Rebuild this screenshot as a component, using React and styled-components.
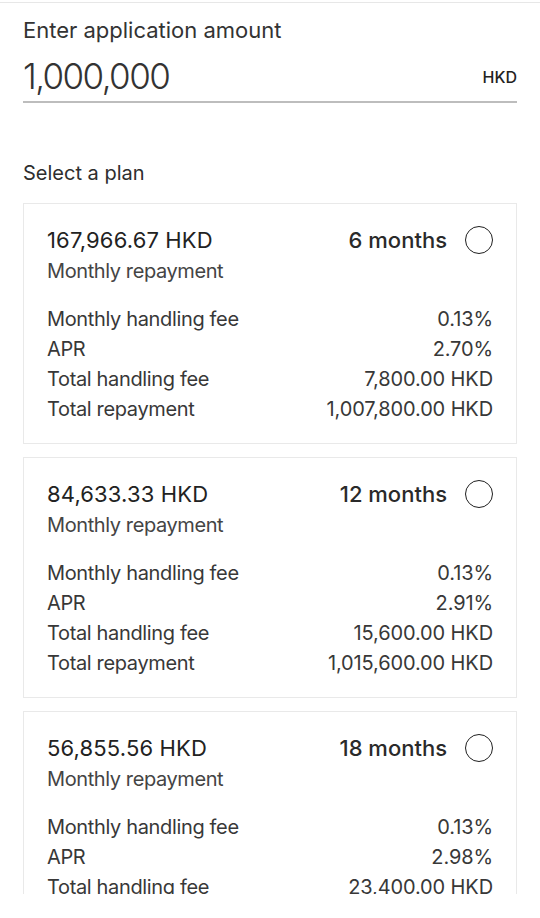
import React from "react";
import styled, { createGlobalStyle } from "styled-components";

const GlobalStyle = createGlobalStyle`
  html, body {
    margin: 0;
    padding: 0;
    background: #ffffff;
  }
  body {
    font-family: Inter, "Noto Sans", "Liberation Sans", sans-serif;
    color: #2b2b2b;
    -webkit-font-smoothing: antialiased;
  }
`;

const plans = [
  {
    amount: "167,966.67 HKD",
    months: "6 months",
    fee: "0.13%",
    apr: "2.70%",
    totalFee: "7,800.00 HKD",
    total: "1,007,800.00 HKD",
  },
  {
    amount: "84,633.33 HKD",
    months: "12 months",
    fee: "0.13%",
    apr: "2.91%",
    totalFee: "15,600.00 HKD",
    total: "1,015,600.00 HKD",
  },
  {
    amount: "56,855.56 HKD",
    months: "18 months",
    fee: "0.13%",
    apr: "2.98%",
    totalFee: "23,400.00 HKD",
    total: "1,023,400.00 HKD",
  },
];

const Page = styled.div`
  height: 918px;
  display: flex;
  flex-direction: column;
  overflow: hidden;
`;

const TopRule = styled.div`
  margin-top: 2px;
  border-top: 1px solid #e7e7e7;
`;

/* visible list area ends at y=894, rest of the window stays white */
const Scroller = styled.div`
  box-sizing: border-box;
  height: 891px;
  overflow: hidden;
  padding: 14px 23px 0 23px;
`;

const FieldLabel = styled.div`
  font-size: 22px;
  line-height: 26px;
  color: #333333;
`;

const AmountField = styled.div`
  margin-top: 11px;
  display: flex;
  align-items: center;
  justify-content: space-between;
  padding-bottom: 3px;
  border-bottom: 2px solid #bdbdbd;
`;

const AmountValue = styled.div`
  font-size: 35px;
  line-height: 44px;
  font-weight: 300;
  letter-spacing: -1.6px;
  color: #333333;
`;

const Currency = styled.div`
  font-size: 16px;
  font-weight: 500;
  color: #222222;
  margin-top: 1px;
`;

const SectionTitle = styled.div`
  margin-top: 58px;
  font-size: 20px;
  line-height: 24px;
  color: #2e2e2e;
`;

const PlanList = styled.div`
  margin-top: 18px;
  display: flex;
  flex-direction: column;
  gap: 13px;
`;

const PlanCard = styled.div`
  border: 1px solid #e9e9e9;
  padding: 22px 23px 19px 23px;
`;

const PlanHeader = styled.div`
  display: flex;
  justify-content: space-between;
  align-items: flex-start;
`;

const Monthly = styled.div`
  font-size: 22px;
  line-height: 28px;
  color: #222222;
  letter-spacing: 0.15px;
`;

const Caption = styled.div`
  margin-top: 3px;
  font-size: 20px;
  line-height: 28px;
  letter-spacing: -0.4px;
  color: #444444;
`;

const Term = styled.label`
  display: flex;
  align-items: center;
  gap: 18px;
  font-size: 22px;
  line-height: 28px;
  font-weight: 500;
  color: #2a2a2a;
`;

const Radio = styled.span`
  width: 28px;
  height: 28px;
  box-sizing: border-box;
  border-radius: 50%;
  border: 1.5px solid #1f1f1f;
  background: #fff;
`;

const Details = styled.div`
  margin-top: 19px;
`;

const DetailRow = styled.div`
  display: flex;
  justify-content: space-between;
  font-size: 20px;
  line-height: 30px;
  color: #383838;
`;

const DetailLabel = styled.span`
  letter-spacing: -0.35px;
`;

const DetailValue = styled.span`
  letter-spacing: -0.12px;
`;

const Plan = ({ plan }) => (
  <PlanCard>
    <PlanHeader>
      <div>
        <Monthly>{plan.amount}</Monthly>
        <Caption>Monthly repayment</Caption>
      </div>
      <Term>
        {plan.months}
        <Radio />
      </Term>
    </PlanHeader>
    <Details>
      <DetailRow>
        <DetailLabel>Monthly handling fee</DetailLabel>
        <DetailValue>{plan.fee}</DetailValue>
      </DetailRow>
      <DetailRow>
        <DetailLabel>APR</DetailLabel>
        <DetailValue>{plan.apr}</DetailValue>
      </DetailRow>
      <DetailRow>
        <DetailLabel>Total handling fee</DetailLabel>
        <DetailValue>{plan.totalFee}</DetailValue>
      </DetailRow>
      <DetailRow>
        <DetailLabel>Total repayment</DetailLabel>
        <DetailValue>{plan.total}</DetailValue>
      </DetailRow>
    </Details>
  </PlanCard>
);

const App = () => {
  return (
    <>
      <GlobalStyle />
      <Page>
        <TopRule />
        <Scroller>
          <FieldLabel>Enter application amount</FieldLabel>
          <AmountField>
            <AmountValue>1,000,000</AmountValue>
            <Currency>HKD</Currency>
          </AmountField>
          <SectionTitle>Select a plan</SectionTitle>
          <PlanList>
            {plans.map((p) => (
              <Plan key={p.months} plan={p} />
            ))}
          </PlanList>
        </Scroller>
      </Page>
    </>
  );
};

export default App;
